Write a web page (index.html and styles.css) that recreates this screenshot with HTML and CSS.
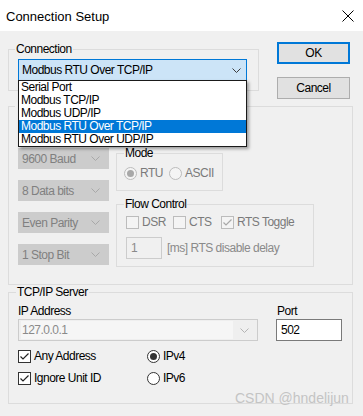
FILE: index.html
```html
<!DOCTYPE html>
<html>
<head>
<meta charset="utf-8">
<title>Connection Setup</title>
<link rel="stylesheet" href="styles.css">
</head>
<body>
<div class="window">
  <div class="titlebar">
    <span class="title">Connection Setup</span>
    <svg class="close" width="12" height="12" viewBox="0 0 12 12"><path d="M0.5 0.5 L11.5 11.5 M11.5 0.5 L0.5 11.5" stroke="#000" stroke-width="1" fill="none"/></svg>
  </div>
  <div class="client">
    <div class="top-row">
      <fieldset class="group conn">
        <legend class="lg-conn">Connection</legend>
        <div class="combo active">
          <span>Modbus RTU Over TCP/IP</span>
          <svg class="chev" width="9" height="5" viewBox="0 0 9 5"><path d="M0.5 0.5 L4.5 4.5 L8.5 0.5" stroke="#3c3c3c" fill="none"/></svg>
          <ul class="droplist">
            <li>Serial Port</li>
            <li>Modbus TCP/IP</li>
            <li>Modbus UDP/IP</li>
            <li class="sel">Modbus RTU Over TCP/IP</li>
            <li>Modbus RTU Over UDP/IP</li>
          </ul>
        </div>
      </fieldset>
      <div class="buttons">
        <button class="btn default">OK</button>
        <button class="btn">Cancel</button>
      </div>
    </div>

    <fieldset class="group serial">
      <legend class="lg-conn lg-hidden"></legend>
      <div class="serial-grid">
        <div class="left-col">
          <div class="combo disabled"><span></span><svg class="chev" width="9" height="5" viewBox="0 0 9 5"><path d="M0.5 0.5 L4.5 4.5 L8.5 0.5" stroke="#a8a8a8" fill="none"/></svg></div>
          <div class="combo disabled"><span>9600 Baud</span><svg class="chev" width="9" height="5" viewBox="0 0 9 5"><path d="M0.5 0.5 L4.5 4.5 L8.5 0.5" stroke="#a8a8a8" fill="none"/></svg></div>
          <div class="combo disabled"><span>8 Data bits</span><svg class="chev" width="9" height="5" viewBox="0 0 9 5"><path d="M0.5 0.5 L4.5 4.5 L8.5 0.5" stroke="#a8a8a8" fill="none"/></svg></div>
          <div class="combo disabled"><span>Even Parity</span><svg class="chev" width="9" height="5" viewBox="0 0 9 5"><path d="M0.5 0.5 L4.5 4.5 L8.5 0.5" stroke="#a8a8a8" fill="none"/></svg></div>
          <div class="combo disabled"><span>1 Stop Bit</span><svg class="chev" width="9" height="5" viewBox="0 0 9 5"><path d="M0.5 0.5 L4.5 4.5 L8.5 0.5" stroke="#a8a8a8" fill="none"/></svg></div>
        </div>
        <div class="right-col">
          <fieldset class="group mode">
            <legend class="lg-mode">Mode</legend>
            <div class="radio-row">
              <label class="opt dis rtu"><span class="radio dis on"></span><span>RTU</span></label>
              <label class="opt dis"><span class="radio dis"></span><span>ASCII</span></label>
            </div>
          </fieldset>
          <fieldset class="group flow">
            <legend class="lg-flow">Flow Control</legend>
            <div class="check-row">
              <label class="opt dis w-dsr"><span class="check dis"></span><span>DSR</span></label>
              <label class="opt dis w-cts"><span class="check dis"></span><span>CTS</span></label>
              <label class="opt dis"><span class="check dis"><svg width="11" height="11" viewBox="0 0 11 11"><path d="M1.5 5.5 L4 8 L9.5 2.5" stroke="#a8a8a8" stroke-width="1.2" fill="none"/></svg></span><span>RTS Toggle</span></label>
            </div>
            <div class="delay-row">
              <div class="textbox dis">1</div>
              <span class="dis-text">[ms] RTS disable delay</span>
            </div>
          </fieldset>
        </div>
      </div>
    </fieldset>

    <fieldset class="group tcp">
      <legend class="lg-tcp">TCP/IP Server</legend>
      <div class="tcp-top">
        <div class="ip-col">
          <div class="field-label">IP Address</div>
          <div class="ipcombo">
            <div class="ipfield">127.0.0.1</div>
            <svg class="chev" width="9" height="5" viewBox="0 0 9 5"><path d="M0.5 0.5 L4.5 4.5 L8.5 0.5" stroke="#b4b4b4" fill="none"/></svg>
          </div>
        </div>
        <div class="port-col">
          <div class="field-label port-label">Port</div>
          <div class="textbox port">502</div>
        </div>
      </div>
      <div class="options">
        <label class="opt"><span class="check"><svg width="11" height="11" viewBox="0 0 11 11"><path d="M1.5 5.5 L4 8 L9.5 2.5" stroke="#222" stroke-width="1.2" fill="none"/></svg></span><span>Any Address</span></label>
        <label class="opt"><span class="radio on"></span><span>IPv4</span></label>
        <label class="opt"><span class="check"><svg width="11" height="11" viewBox="0 0 11 11"><path d="M1.5 5.5 L4 8 L9.5 2.5" stroke="#222" stroke-width="1.2" fill="none"/></svg></span><span>Ignore Unit ID</span></label>
        <label class="opt"><span class="radio"></span><span>IPv6</span></label>
      </div>
    </fieldset>
  </div>
  <div class="watermark">CSDN @hndelijun</div>
</div>
</body>
</html>
```

FILE: styles.css
```css
* { box-sizing: border-box; }
html, body { margin: 0; padding: 0; }
body {
  width: 363px;
  height: 416px;
  overflow: hidden;
  background: #f0f0f0;
  font-family: "Liberation Sans", Arial, sans-serif;
  font-size: 12px;
  letter-spacing: -0.5px;
  color: #000;
}
.window { position: relative; width: 363px; height: 416px; }

.titlebar {
  height: 31px;
  background: #fff;
  display: flex;
  justify-content: space-between;
  align-items: flex-start;
  padding: 2px 9px 0 6px;
}
.title {
  font-size: 13px;
  letter-spacing: 0;
  line-height: 29px;
}
.close { margin-top: 8px; }

.client { padding: 11px 0 0 8px; }

.top-row { display: flex; align-items: flex-start; gap: 18px; }

fieldset.group {
  margin: 0;
  min-width: 0;
  border: 1px solid #dcdcdc;
}
legend {
  font-size: 12px;
  line-height: 14px;
  padding: 0 1px;
}
.lg-conn { margin-left: -3px; }
.lg-hidden { width: 90px; height: 14px; }
.lg-mode { margin-left: 0; }
.lg-flow { margin-left: -2px; }
.lg-tcp { margin-left: -2px; }

.conn { width: 251px; padding: 3px 11px 9px 9px; }

.combo {
  position: relative;
  display: flex;
  align-items: center;
  justify-content: space-between;
  height: 21px;
  padding: 0 5px 0 3px;
  border: 1px solid #cccccc;
  white-space: nowrap;
}
.combo.active {
  height: 22px;
  background: #cce4f7;
  border-color: #0078d7;
}
.combo.disabled {
  background: #cccccc;
  color: #808080;
}
.chev { flex: none; }

.droplist {
  position: absolute;
  z-index: 5;
  left: -1px;
  right: -1px;
  top: 20px;
  margin: 0;
  padding: 0;
  list-style: none;
  background: #fff;
  border: 1px solid #1a1a1a;
  box-shadow: 2px 2px 3px rgba(0, 0, 0, 0.35);
}
.droplist li {
  height: 13px;
  line-height: 13px;
  padding-left: 2px;
  color: #000;
}
.droplist li.sel { background: #0078d7; color: #fff; }

.buttons { display: flex; flex-direction: column; gap: 13px; }
.btn {
  width: 73px;
  height: 22px;
  padding: 0;
  font-family: inherit;
  font-size: 12px;
  letter-spacing: -0.5px;
  color: #000;
  background: #e1e1e1;
  border: 1px solid #adadad;
}
.btn.default { border: 2px solid #0078d7; }

.serial { width: 345px; margin-top: 3px; padding: 3px 0 17px 9px; }
.serial-grid { display: flex; gap: 7px; align-items: flex-start; }
.left-col { width: 91px; display: flex; flex-direction: column; gap: 11px; }
.left-col .combo { padding-right: 8px; }
.right-col {
  padding-top: 30px;
  display: flex;
  flex-direction: column;
  align-items: flex-start;
  gap: 6px;
}

.mode { width: 107px; padding: 7px 0 10px 7px; }
.radio-row { display: flex; gap: 6px; height: 13px; }
.flow { width: 198px; padding: 5px 0 7px 9px; }
.check-row { display: flex; height: 13px; }
.w-dsr { width: 47px; }
.w-cts { width: 48px; }
.delay-row { display: flex; align-items: center; gap: 5px; margin-top: 8px; }

.opt {
  display: flex;
  align-items: flex-start;
  gap: 3px;
  height: 13px;
  line-height: 13px;
  white-space: nowrap;
}
.opt.dis { color: #7a7a7a; }
.check, .radio {
  flex: none;
  width: 13px;
  height: 13px;
  border: 1px solid #333333;
  background: #fff;
  display: flex;
  align-items: center;
  justify-content: center;
}
.radio { border-radius: 50%; }
.radio.on::after {
  content: "";
  width: 7px;
  height: 7px;
  border-radius: 50%;
  background: #333333;
}
.check.dis, .radio.dis { border-color: #bcbcbc; background: #f4f4f4; }
.radio.dis.on::after { background: #a8a8a8; }

.textbox {
  height: 22px;
  line-height: 20px;
  padding-left: 4px;
  border: 1px solid #7a7a7a;
  background: #fff;
}
.textbox.dis {
  width: 36px;
  border-color: #cccccc;
  background: #f0f0f0;
  color: #8a8a8a;
}
.dis-text { color: #8a8a8a; }

.tcp { width: 345px; margin-top: 2px; padding: 5px 0 18px 9px; }
.tcp-top { display: flex; gap: 18px; }
.field-label { height: 14px; line-height: 14px; }
.port-label { padding-left: 1px; }
.ip-col { width: 240px; }
.ipcombo {
  margin-top: 1px;
  height: 22px;
  border: 1px solid #cccccc;
  background: #efefef;
  display: flex;
  align-items: center;
  padding: 1px 8px 1px 2px;
  gap: 7px;
}
.ipfield {
  flex: 1;
  height: 18px;
  line-height: 18px;
  padding-left: 1px;
  background: #f6f6f6;
  color: #8a8a8a;
}
.port-col { width: 66px; }
.textbox.port { margin-top: 1px; width: 66px; }

.options {
  margin-top: 9px;
  display: grid;
  grid-template-columns: 129px auto;
  row-gap: 9px;
}
.options .opt { gap: 3px; }

.watermark {
  position: absolute;
  left: 235px;
  top: 390px;
  font-size: 14px;
  letter-spacing: 0;
  line-height: 16px;
  color: #c4c4c4;
}
```
